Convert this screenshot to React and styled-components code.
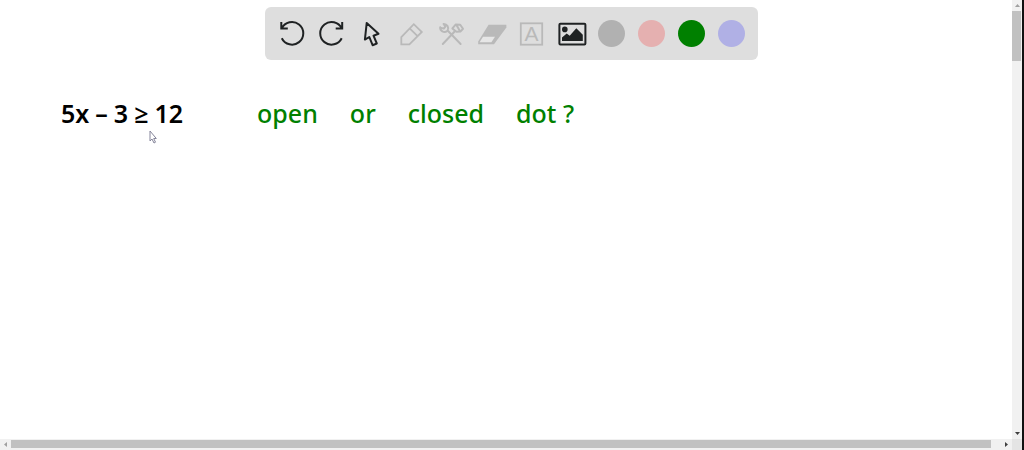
import { useState } from "react"
import styled, { createGlobalStyle } from "styled-components"

const GlobalStyle = createGlobalStyle`
    * {
        box-sizing: border-box;
    }
    body {
        margin: 0;
        background-color: #fff;
        font-family: "Noto Sans", "Open Sans", sans-serif;
    }
`
const Page = styled.div`
    display: grid;
    grid-template-columns: minmax(0, 1fr) 10px;
    grid-template-rows: minmax(0, 1fr) 11px;
    height: 100vh;
    border-right: 2px solid #111;
`
const Board = styled.main`
    position: relative;
    overflow: hidden;
    padding: 7px 0 0 11px;
`
const Toolbar = styled.div`
    display: flex;
    align-items: center;
    width: fit-content;
    height: 53px;
    margin: 0 auto;
    padding: 0 7px 0 6px;
    border-radius: 6px;
    background-color: #dedede;
`
const ToolButton = styled.button`
    display: flex;
    align-items: center;
    justify-content: center;
    width: 40px;
    height: 40px;
    padding: 0;
    border: none;
    background: none;
    color: ${({ $muted }) => ($muted ? "#b9b9b9" : "#1f2223")};
    cursor: pointer;
`
const Icon = styled.svg`
    width: 40px;
    height: 40px;
    fill: none;
    stroke: currentColor;
    stroke-width: 2;
`
const Swatch = styled.span`
    width: 27px;
    height: 27px;
    border-radius: 50%;
    background-color: ${({ $color }) => $color};
`
const Notes = styled.div`
    display: flex;
    align-items: baseline;
    gap: 74px;
    padding: 35px 0 0 50px;
    font-size: 25px;
    line-height: 36px;
    white-space: nowrap;
`
const Line = styled.p`
    display: flex;
    gap: ${({ $gap }) => $gap}px;
    margin: 0;
    color: ${({ $color }) => $color};
    font-weight: ${({ $weight }) => $weight};
`
const Pointer = styled.svg`
    position: absolute;
    left: 149px;
    top: 130px;
    width: 8px;
    height: 14px;
    fill: #fff;
    stroke: #85859a;
`
const ScrollBar = styled.div`
    display: flex;
    flex-direction: ${({ $vertical }) => ($vertical ? "column" : "row")};
    background-color: #f1f1f1;
`
const Track = styled.div`
    flex: 1;
    padding: ${({ $vertical }) => ($vertical ? "0 1px 0 0" : "1px 0 2px")};
`
const Thumb = styled.div`
    width: ${({ $vertical }) => ($vertical ? "100%" : "99%")};
    height: ${({ $vertical }) => ($vertical ? "12%" : "100%")};
    background-color: #c1c1c1;
`
const ScrollButton = styled.button`
    display: flex;
    align-items: center;
    justify-content: center;
    flex: none;
    width: 11px;
    height: 11px;
    padding: 0;
    border: none;
    background: none;
    color: ${({ $muted }) => ($muted ? "#a0a0a0" : "#404040")};

    svg {
        width: 5px;
        height: 5px;
        fill: currentColor;
    }
`
const Corner = styled.div`
    background-color: #e4e4e4;
`

const tools = [
    {
        name: "Undo",
        icon: <path d="M10.3 8v6.4h6.5M10.8 14.4A11.3 11.3 0 1 1 10.8 24.2" />,
    },
    {
        name: "Redo",
        icon: <path d="M31.2 8v6.4h-6.5M30.7 14.4A11.3 11.3 0 1 0 30.7 24.2" />,
    },
    {
        name: "Select",
        icon: <path d="M15.7 9L13.9 25.6l4.4-2.6 3.3 8.2 4.2-1.7-3.3-7.8 5-1.9z" strokeLinejoin="round" />,
    },
    {
        name: "Pen",
        muted: true,
        icon: <path d="M10.3 30.4v-7.4L22.8 10.2l8 7.8-12.4 12.4zM18.6 14.4l8 7.8" strokeWidth="1.8" />,
    },
    {
        name: "Tools",
        muted: true,
        icon: (
            <g strokeWidth="2" strokeLinecap="round" strokeLinejoin="round">
                <path d="M12.6 9.9a4.4 4.4 0 0 1 4 6.6L29.6 30M9.2 13.2a4.4 4.4 0 0 0 6.8 4M12.6 10l1.8 2.6-1.6 2-3.4-1" />
                <path d="M11.8 30L23.4 17.8M21.4 14.4l3.2-3.8 4.6.2 2.8 4-2.6 2.8-4 .2zM25.6 11.2l3 5.4" />
            </g>
        ),
    },
    {
        name: "Eraser",
        muted: true,
        icon: (
            <>
                <path d="M17.6 10.8h17.8v2.6L23 30.2H7.2v-2.6z" fill="currentColor" stroke="none" />
                <path d="M12 22.8h12l-3.6 5.4H8.6z" fill="#e6e6e6" stroke="none" />
            </>
        ),
    },
    {
        name: "Text",
        muted: true,
        icon: (
            <>
                <rect x="9.8" y="9.3" width="21.4" height="21.4" strokeWidth="1.8" />
                <text
                    x="20.5"
                    y="27"
                    textAnchor="middle"
                    fontFamily="Liberation Sans, sans-serif"
                    fontSize="21"
                    fill="currentColor"
                    stroke="none"
                >
                    A
                </text>
            </>
        ),
    },
    {
        name: "Image",
        icon: (
            <>
                <rect x="8.4" y="9.8" width="26" height="20.6" rx="1" />
                <g fill="currentColor" stroke="none">
                    <circle cx="13.8" cy="15.4" r="2.8" />
                    <path d="M11 27v-3.4l4.7-4 3 2.2 6.6-7.6 6.5 6.6V27z" />
                </g>
            </>
        ),
    },
]

const colors = [
    { name: "Gray", value: "#b1b1b1" },
    { name: "Red", value: "#e5b0b0" },
    { name: "Green", value: "#008000" },
    { name: "Blue", value: "#b0b0e5" },
]

const arrows = {
    up: "M0 4h5L2.5 1z",
    down: "M0 1h5L2.5 4z",
    left: "M4 0v5L1 2.5z",
    right: "M1 0v5l3-2.5z",
}

const ScrollArrow = ({ direction, muted }) => (
    <ScrollButton type="button" aria-label={`Scroll ${direction}`} $muted={muted}>
        <svg viewBox="0 0 5 5">
            <path d={arrows[direction]} />
        </svg>
    </ScrollButton>
)

const App = () => {
    const [color, setColor] = useState("Green")

    return (
        <>
            <GlobalStyle />
            <Page>
                <Board>
                    <Toolbar role="toolbar" aria-label="Drawing tools">
                        {tools.map(({ name, icon, muted }) => (
                            <ToolButton key={name} type="button" aria-label={name} $muted={muted}>
                                <Icon viewBox="0 0 40 40">{icon}</Icon>
                            </ToolButton>
                        ))}
                        {colors.map(({ name, value }) => (
                            <ToolButton
                                key={name}
                                type="button"
                                aria-label={name}
                                aria-pressed={color === name}
                                onClick={() => setColor(name)}
                            >
                                <Swatch $color={value} />
                            </ToolButton>
                        ))}
                    </Toolbar>
                    <Notes>
                        <Line $color="#000" $weight={600} $gap={6}>
                            <span>5x</span>
                            <span>–</span>
                            <span>3</span>
                            <span>≥</span>
                            <span>12</span>
                        </Line>
                        <Line $color="#008000" $weight={500} $gap={32}>
                            <span>open</span>
                            <span>or</span>
                            <span>closed</span>
                            <span>dot ?</span>
                        </Line>
                    </Notes>
                    <Pointer viewBox="0 0 8 14" aria-hidden="true">
                        <path d="M1 1v10l2-2 2 4 1.5-.8-1.8-3.7h2.6z" />
                    </Pointer>
                </Board>
                <ScrollBar $vertical>
                    <ScrollArrow direction="up" muted />
                    <Track $vertical>
                        <Thumb $vertical />
                    </Track>
                    <ScrollArrow direction="down" />
                </ScrollBar>
                <ScrollBar>
                    <ScrollArrow direction="left" muted />
                    <Track>
                        <Thumb />
                    </Track>
                    <ScrollArrow direction="right" />
                </ScrollBar>
                <Corner />
            </Page>
        </>
    )
}

export default App
